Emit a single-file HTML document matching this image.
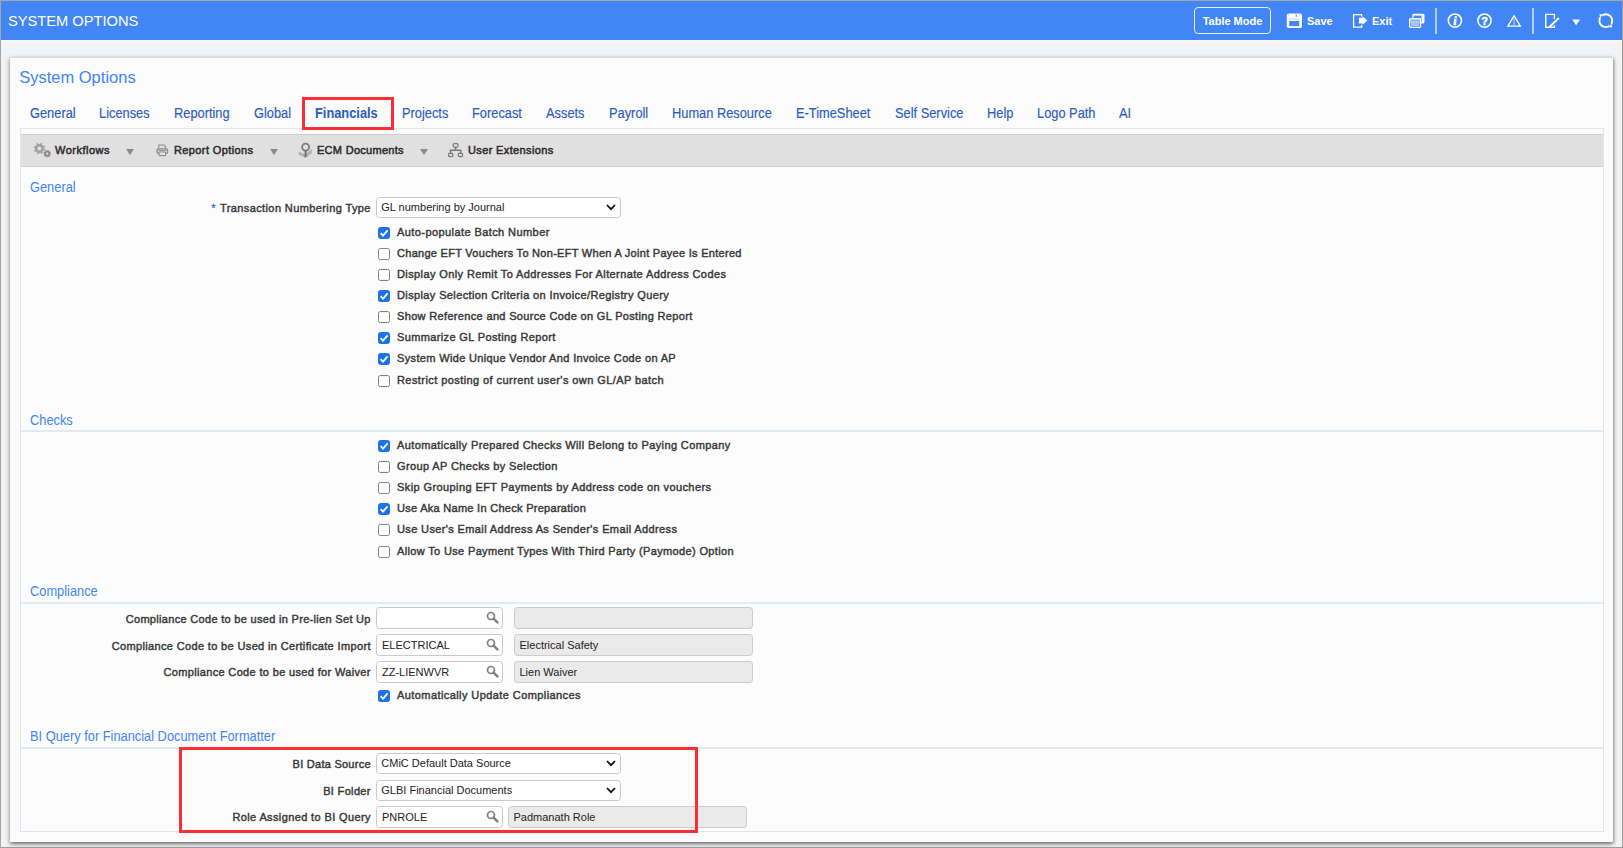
<!DOCTYPE html>
<html>
<head>
<meta charset="utf-8">
<title>System Options</title>
<style>
*{box-sizing:border-box;margin:0;padding:0}
html,body{width:1623px;height:848px;overflow:hidden;background:#f1f3f4;font-family:"Liberation Sans",sans-serif;}
body{position:relative}
.abs{position:absolute}
#frame{position:absolute;left:0;top:0;width:1623px;height:848px;border:1px solid #a6a6a6;border-right-color:#9c9c9c;border-bottom-color:#9c9c9c;z-index:50;pointer-events:none}
#hdr{position:absolute;left:1px;top:1px;width:1621px;height:39.3px;background:#4285f4}
#hdr:after{content:'';position:absolute;left:0;top:39.4px;width:100%;height:1.2px;background:#f9f9f7;opacity:.8}
#hdr .title{position:absolute;left:7px;top:0;line-height:40px;font-size:14.67px;color:#fff;white-space:nowrap}
#card{position:absolute;left:10px;top:57px;width:1603px;height:785px;background:#fbfbfb;border-top:1px solid #dcdcdc;box-shadow:0 1.5px 4.5px rgba(0,0,0,.5), 1px 1px 2px rgba(0,0,0,.15)}
#ptitle{position:absolute;left:19.2px;top:66px;line-height:22px;font-size:16.5px;color:#4285f4;white-space:nowrap}
.tab{position:absolute;top:104.5px;line-height:18px;font-size:12.83px;color:#2b5cc0;-webkit-text-stroke:.15px #2b5cc0;transform:scaleY(1.16);transform-origin:0 13.2px;white-space:nowrap}
.tab.sel{font-weight:bold;-webkit-text-stroke:0}
#panel{position:absolute;left:20px;top:128px;width:1584px;height:704px;border:1px solid #dde5ee;background:#fcfcfc}
#tbar{position:absolute;left:21px;top:134px;width:1582px;height:33px;background:#e0e0e0;border-top:1px solid #cdcdcd;border-bottom:1px solid #cdcdcd}
.tb{position:absolute;top:142px;line-height:16px;font-size:11px;color:#2c2c2c;-webkit-text-stroke:.5px #2c2c2c;white-space:nowrap}
.sec{position:absolute;left:30px;line-height:18px;font-size:12.83px;color:#4285f4;white-space:nowrap;transform:scaleY(1.16);transform-origin:0 13.2px;margin-top:.4px}
.hr{position:absolute;left:21px;width:1582px;height:2px;background:#e4eaf1}
.lbl{position:absolute;right:1252.2px;line-height:16px;font-size:11px;color:#363636;-webkit-text-stroke:.42px #383838;white-space:nowrap;text-align:right}
.cl{position:absolute;left:397px;line-height:16px;font-size:11px;color:#363636;-webkit-text-stroke:.42px #383838;white-space:nowrap}
.cb{position:absolute;left:378px;width:12px;height:12px;border:1px solid #808080;border-radius:2.5px;background:#fff}
.cb.on{background:#1a73e8;border-color:#1a73e8}
.cb.on svg{position:absolute;left:-1px;top:-1px;width:12px;height:12px}
.dd{position:absolute;left:376px;width:245px;height:21px;border:1px solid #c9c9c9;border-radius:3.5px;background:#fff;font-size:11px;line-height:19px;color:#222;padding-left:4.3px;white-space:nowrap}
.dd svg{position:absolute;right:4px;top:6px;width:10px;height:7px}
.in{position:absolute;left:376px;width:127px;height:21px;border:1px solid #c9c9c9;border-radius:3.5px;background:#fff;font-size:11px;line-height:19px;color:#222;padding-left:5px;white-space:nowrap}
.in svg{position:absolute;right:3px;top:3px;width:13px;height:13px}
.ro{position:absolute;width:239px;height:21px;border:1px solid #cbcbcb;border-radius:3.5px;background:#eaeaea;font-size:11px;line-height:19px;color:#222;padding-left:5px;white-space:nowrap}
.hb{top:13px;line-height:16px;font-size:11px;font-weight:bold;color:#fff;white-space:nowrap}
.red{position:absolute;border:3px solid #fa2e33}
</style>
</head>
<body>
<div id="hdr"><div class="title">SYSTEM OPTIONS</div></div>
<div id="card"></div>
<div id="ptitle">System Options</div>
<div id="panel"></div>
<div id="tbar"></div>
<div class="tab" style="left:30px">General</div>
<div class="tab" style="left:99px">Licenses</div>
<div class="tab" style="left:174px">Reporting</div>
<div class="tab" style="left:254px">Global</div>
<div class="tab sel" style="left:315px">Financials</div>
<div class="tab" style="left:402px">Projects</div>
<div class="tab" style="left:472px">Forecast</div>
<div class="tab" style="left:546px">Assets</div>
<div class="tab" style="left:609px">Payroll</div>
<div class="tab" style="left:672px">Human Resource</div>
<div class="tab" style="left:796px">E-TimeSheet</div>
<div class="tab" style="left:895px">Self Service</div>
<div class="tab" style="left:987px">Help</div>
<div class="tab" style="left:1037px">Logo Path</div>
<div class="tab" style="left:1119px">AI</div>
<div class="red" style="left:302px;top:97px;width:92px;height:33px"></div>
<div class="tb" style="left:55px;letter-spacing:0.503px">Workflows</div>
<div class="tb" style="left:174px;letter-spacing:0.394px">Report Options</div>
<div class="tb" style="left:317px;letter-spacing:0.288px">ECM Documents</div>
<div class="tb" style="left:468px;letter-spacing:0.367px">User Extensions</div>
<svg class="abs" style="left:125.69999999999999px;top:148.5px" width="8" height="6" viewBox="0 0 8 6"><path d="M0 0H8L4 6Z" fill="#8a8a8a"/></svg>
<svg class="abs" style="left:269.7px;top:148.5px" width="8" height="6" viewBox="0 0 8 6"><path d="M0 0H8L4 6Z" fill="#8a8a8a"/></svg>
<svg class="abs" style="left:419.7px;top:148.5px" width="8" height="6" viewBox="0 0 8 6"><path d="M0 0H8L4 6Z" fill="#8a8a8a"/></svg>
<div class="sec" style="top:179px">General</div>
<div class="sec" style="top:412px">Checks</div>
<div class="hr" style="top:430px"></div>
<div class="sec" style="top:583px">Compliance</div>
<div class="hr" style="top:602px"></div>
<div class="sec" style="top:728px">BI Query for Financial Document Formatter</div>
<div class="hr" style="top:747px"></div>
<div class="cb on" style="top:226.6px"><svg viewBox="0 0 12 12"><path d="M2.6 6.2L5 8.6L9.6 3.4" fill="none" stroke="#fff" stroke-width="1.8"/></svg></div><div class="cl" style="top:224px;letter-spacing:0.419px">Auto-populate Batch Number</div>
<div class="cb" style="top:247.6px"></div><div class="cl" style="top:245px;letter-spacing:0.283px">Change EFT Vouchers To Non-EFT When A Joint Payee Is Entered</div>
<div class="cb" style="top:268.6px"></div><div class="cl" style="top:266px;letter-spacing:0.393px">Display Only Remit To Addresses For Alternate Address Codes</div>
<div class="cb on" style="top:289.6px"><svg viewBox="0 0 12 12"><path d="M2.6 6.2L5 8.6L9.6 3.4" fill="none" stroke="#fff" stroke-width="1.8"/></svg></div><div class="cl" style="top:287px;letter-spacing:0.376px">Display Selection Criteria on Invoice/Registry Query</div>
<div class="cb" style="top:310.6px"></div><div class="cl" style="top:308px;letter-spacing:0.337px">Show Reference and Source Code on GL Posting Report</div>
<div class="cb on" style="top:331.6px"><svg viewBox="0 0 12 12"><path d="M2.6 6.2L5 8.6L9.6 3.4" fill="none" stroke="#fff" stroke-width="1.8"/></svg></div><div class="cl" style="top:329px;letter-spacing:0.369px">Summarize GL Posting Report</div>
<div class="cb on" style="top:352.6px"><svg viewBox="0 0 12 12"><path d="M2.6 6.2L5 8.6L9.6 3.4" fill="none" stroke="#fff" stroke-width="1.8"/></svg></div><div class="cl" style="top:350px;letter-spacing:0.348px">System Wide Unique Vendor And Invoice Code on AP</div>
<div class="cb" style="top:374.6px"></div><div class="cl" style="top:372px;letter-spacing:0.424px">Restrict posting of current user's own GL/AP batch</div>
<div class="cb on" style="top:439.6px"><svg viewBox="0 0 12 12"><path d="M2.6 6.2L5 8.6L9.6 3.4" fill="none" stroke="#fff" stroke-width="1.8"/></svg></div><div class="cl" style="top:437px;letter-spacing:0.391px">Automatically Prepared Checks Will Belong to Paying Company</div>
<div class="cb" style="top:460.6px"></div><div class="cl" style="top:458px;letter-spacing:0.377px">Group AP Checks by Selection</div>
<div class="cb" style="top:481.6px"></div><div class="cl" style="top:479px;letter-spacing:0.402px">Skip Grouping EFT Payments by Address code on vouchers</div>
<div class="cb on" style="top:502.6px"><svg viewBox="0 0 12 12"><path d="M2.6 6.2L5 8.6L9.6 3.4" fill="none" stroke="#fff" stroke-width="1.8"/></svg></div><div class="cl" style="top:500px;letter-spacing:0.284px">Use Aka Name In Check Preparation</div>
<div class="cb" style="top:523.6px"></div><div class="cl" style="top:521px;letter-spacing:0.375px">Use User's Email Address As Sender's Email Address</div>
<div class="cb" style="top:545.6px"></div><div class="cl" style="top:543px;letter-spacing:0.347px">Allow To Use Payment Types With Third Party (Paymode) Option</div>
<div class="cb on" style="top:689.6px"><svg viewBox="0 0 12 12"><path d="M2.6 6.2L5 8.6L9.6 3.4" fill="none" stroke="#fff" stroke-width="1.8"/></svg></div><div class="cl" style="top:687px;letter-spacing:0.419px">Automatically Update Compliances</div>
<div class="lbl" style="top:200px;letter-spacing:0.390px"><span style="color:#3b74e0;-webkit-text-stroke:.3px #3b74e0;margin-right:4px">*</span>Transaction Numbering Type</div>
<div class="dd" style="top:197px">GL numbering by Journal<svg viewBox="0 0 10 7"><path d="M1 1L5 5.2L9 1" fill="none" stroke="#111" stroke-width="1.8"/></svg></div>
<div class="lbl" style="top:611px;letter-spacing:0.310px">Compliance Code to be used in Pre-lien Set Up</div>
<div class="in" style="top:607.4px;height:22px;line-height:20px"><svg viewBox="0 0 13 13"><circle cx="5" cy="5" r="3.5" fill="none" stroke="#808080" stroke-width="1.7"/><path d="M7.6 7.6L11.4 11.4" stroke="#808080" stroke-width="2.4" stroke-linecap="round"/></svg></div>
<div class="ro" style="left:513.5px;top:607.4px;height:22px;line-height:20px"></div>
<div class="lbl" style="top:638px;letter-spacing:0.355px">Compliance Code to be Used in Certificate Import</div>
<div class="in" style="top:634.2px;height:22px;line-height:20px">ELECTRICAL<svg viewBox="0 0 13 13"><circle cx="5" cy="5" r="3.5" fill="none" stroke="#808080" stroke-width="1.7"/><path d="M7.6 7.6L11.4 11.4" stroke="#808080" stroke-width="2.4" stroke-linecap="round"/></svg></div>
<div class="ro" style="left:513.5px;top:634.2px;height:22px;line-height:20px">Electrical Safety</div>
<div class="lbl" style="top:664px;letter-spacing:0.345px">Compliance Code to be used for Waiver</div>
<div class="in" style="top:660.8px;height:22px;line-height:20px">ZZ-LIENWVR<svg viewBox="0 0 13 13"><circle cx="5" cy="5" r="3.5" fill="none" stroke="#808080" stroke-width="1.7"/><path d="M7.6 7.6L11.4 11.4" stroke="#808080" stroke-width="2.4" stroke-linecap="round"/></svg></div>
<div class="ro" style="left:513.5px;top:660.8px;height:22px;line-height:20px">Lien Waiver</div>
<div class="lbl" style="top:756px;letter-spacing:0.261px">BI Data Source</div>
<div class="dd" style="top:753px">CMiC Default Data Source<svg viewBox="0 0 10 7"><path d="M1 1L5 5.2L9 1" fill="none" stroke="#111" stroke-width="1.8"/></svg></div>
<div class="lbl" style="top:783px;letter-spacing:0.337px">BI Folder</div>
<div class="dd" style="top:780px">GLBI Financial Documents<svg viewBox="0 0 10 7"><path d="M1 1L5 5.2L9 1" fill="none" stroke="#111" stroke-width="1.8"/></svg></div>
<div class="lbl" style="top:809px;letter-spacing:0.373px">Role Assigned to BI Query</div>
<div class="in" style="top:806.0px;height:22px;line-height:20px">PNROLE<svg viewBox="0 0 13 13"><circle cx="5" cy="5" r="3.5" fill="none" stroke="#808080" stroke-width="1.7"/><path d="M7.6 7.6L11.4 11.4" stroke="#808080" stroke-width="2.4" stroke-linecap="round"/></svg></div>
<div class="ro" style="left:507.5px;top:806.0px;height:22px;line-height:20px">Padmanath Role</div>
<div class="red" style="left:179px;top:747px;width:519px;height:86px"></div>
<div class="abs" style="left:1194px;top:7px;width:77px;height:27px;border:1px solid #e8effd;border-radius:4px;color:#fff;font-size:11px;font-weight:bold;line-height:26.4px;text-align:center;white-space:nowrap">Table Mode</div>
<svg class="abs" style="left:1285px;top:12px" width="18" height="18" viewBox="0 0 18 18"><rect x="1.8" y="1.5" width="15.2" height="14.5" rx="1.8" fill="#fff"/><rect x="4.2" y="9" width="10" height="5.1" fill="#4285f4"/><rect x="4" y="6.3" width="10.6" height="1.6" fill="#4285f4" opacity=".22"/><rect x="10.6" y="2.6" width="1.4" height="2.2" fill="#4285f4" opacity=".8"/><path d="M3.6 1.5V4.4M15 1.5V4.4" stroke="#4285f4" stroke-width=".6" opacity=".45"/></svg>
<div class="abs hb" style="left:1307px">Save</div>
<svg class="abs" style="left:1352px;top:12px" width="18" height="18" viewBox="0 0 18 18"><path d="M9.6 4.6V2.6H1.6V15.2H9.6V13" fill="none" stroke="#fff" stroke-width="1.3"/><path d="M7 5.8H10.6V4.2L15.4 8.5L10.6 12.8V11.4H7Z" fill="#fff"/></svg>
<div class="abs hb" style="left:1372px">Exit</div>
<svg class="abs" style="left:1408px;top:12px" width="18" height="18" viewBox="0 0 18 18"><rect x="4.9" y="2.3" width="11" height="8.6" rx=".8" fill="none" stroke="#fff" stroke-width="1.2"/><rect x="13.6" y="2.3" width="2.3" height="8.6" fill="#fff"/><path d="M5 3.4H15" stroke="#fff" stroke-width="1.4" opacity=".6"/><rect x="1.6" y="6.6" width="11" height="8.8" rx=".8" fill="#4285f4" stroke="#fff" stroke-width="1.2"/><path d="M2 8H12" stroke="#fff" stroke-width="1.6" opacity=".55"/><rect x="2.8" y="10.6" width="8.6" height="3.6" fill="#fff" opacity=".5"/><path d="M2.4 10H11.8" stroke="#fff" stroke-width="1"/></svg>
<div class="abs" style="left:1435px;top:8px;width:2px;height:26px;background:#b5cffb"></div>
<div class="abs" style="left:1532px;top:8px;width:2px;height:26px;background:#b5cffb"></div>
<svg class="abs" style="left:1446px;top:12px" width="18" height="18" viewBox="0 0 18 18"><circle cx="8.9" cy="8.6" r="6.6" fill="none" stroke="#fff" stroke-width="1.6"/><text x="9" y="13.2" text-anchor="middle" font-family="Liberation Serif,serif" font-style="italic" font-weight="bold" font-size="12.5" fill="#fff" stroke="#fff" stroke-width=".4">i</text></svg>
<svg class="abs" style="left:1476px;top:12px" width="18" height="18" viewBox="0 0 18 18"><circle cx="8.5" cy="8.6" r="6.6" fill="none" stroke="#fff" stroke-width="1.6"/><text x="8.6" y="12.7" text-anchor="middle" font-family="Liberation Sans,sans-serif" font-weight="bold" font-size="11" fill="#fff" stroke="#fff" stroke-width=".4">?</text></svg>
<svg class="abs" style="left:1505px;top:12px" width="18" height="18" viewBox="0 0 18 18"><path d="M9.1 3.8L15.4 14.2H2.8Z" fill="none" stroke="#fff" stroke-width="1.3" stroke-linejoin="miter"/><path d="M9.1 6.5V13.6" stroke="#fff" stroke-width="1.2" opacity=".55"/></svg>
<svg class="abs" style="left:1543px;top:12px" width="18" height="18" viewBox="0 0 18 18"><path d="M11.4 7V2.4H2.7V15.2H11.4V13.6" fill="none" stroke="#fff" stroke-width="1.4"/><path d="M15.9 6L6 15.4" stroke="#fff" stroke-width="1.9"/></svg>
<svg class="abs" style="left:1572px;top:19px" width="9" height="7" viewBox="0 0 9 7"><path d="M0.2 0.4H8L4.1 6.2Z" fill="#fff"/></svg>
<svg class="abs" style="left:1596px;top:11px" width="20" height="20" viewBox="0 0 20 20"><circle cx="9.8" cy="9.7" r="6.4" fill="none" stroke="#fff" stroke-width="1.9"/><path d="M2.6 4.6L6.8 3.4L5.6 7.6Z" fill="#4285f4"/><path d="M3.4 3L6.8 3.4L4.2 6.4Z" fill="#fff"/><path d="M17 14.8L12.8 16L14 11.8Z" fill="#4285f4"/><path d="M16.2 16.4L12.8 16L15.4 13Z" fill="#fff"/></svg>
<svg class="abs" style="left:32px;top:142px" width="20" height="17" viewBox="0 0 20 17"><circle cx="7.4" cy="6.5" r="5" fill="none" stroke="#b0b0b0" stroke-width="1.7" stroke-dasharray="2.2 1.73"/><circle cx="7.4" cy="6.5" r="3.3" fill="none" stroke="#a0a0a0" stroke-width="2.5"/><circle cx="15.2" cy="11.7" r="3.1" fill="none" stroke="#9a9a9a" stroke-width="1.3" stroke-dasharray="1.4 1.03"/><circle cx="15.2" cy="11.7" r="2.1" fill="none" stroke="#8c8c8c" stroke-width="2"/></svg>
<svg class="abs" style="left:156px;top:143.6px" width="13" height="13" viewBox="0 0 13 13"><path d="M2.8 4.8V1H7.8L9.6 2.6V4.8" fill="none" stroke="#8e8e8e" stroke-width="1.1"/><rect x="1" y="4.8" width="10.6" height="4.6" rx="1.6" fill="none" stroke="#878787" stroke-width="1.3"/><path d="M2.6 6.6H10" stroke="#8e8e8e" stroke-width="1"/><rect x="3" y="8" width="6.6" height="3.6" rx=".6" fill="#e0e0e0" stroke="#8e8e8e" stroke-width="1.1"/></svg>
<svg class="abs" style="left:297px;top:141px" width="17" height="18" viewBox="0 0 17 18"><path d="M1.7 10.6L8 13.2V16.4L1.7 13.8Z" fill="#b2b2b2"/><path d="M14.9 8L9.2 12.6V16.2L14.9 12.4Z" fill="#b2b2b2"/><circle cx="8.6" cy="6.1" r="3.5" fill="none" stroke="#7c7c7c" stroke-width="1.8"/><path d="M8.6 9.8V16.4" stroke="#727272" stroke-width="2"/></svg>
<svg class="abs" style="left:447px;top:142px" width="17" height="16" viewBox="0 0 17 16"><rect x="6.3" y="1.7" width="4.6" height="3.4" rx=".8" fill="none" stroke="#7e7e7e" stroke-width="1.3"/><path d="M8.6 5.2V8.2M3.5 11.4V8.2H13.7V11.4" fill="none" stroke="#7a7a7a" stroke-width="1.6"/><rect x="1.6" y="11.4" width="4.1" height="3.2" rx=".8" fill="none" stroke="#7e7e7e" stroke-width="1.3"/><rect x="11.4" y="11.4" width="4.1" height="3.2" rx=".8" fill="none" stroke="#7e7e7e" stroke-width="1.3"/></svg>
<div id="frame"></div>
</body>
</html>
